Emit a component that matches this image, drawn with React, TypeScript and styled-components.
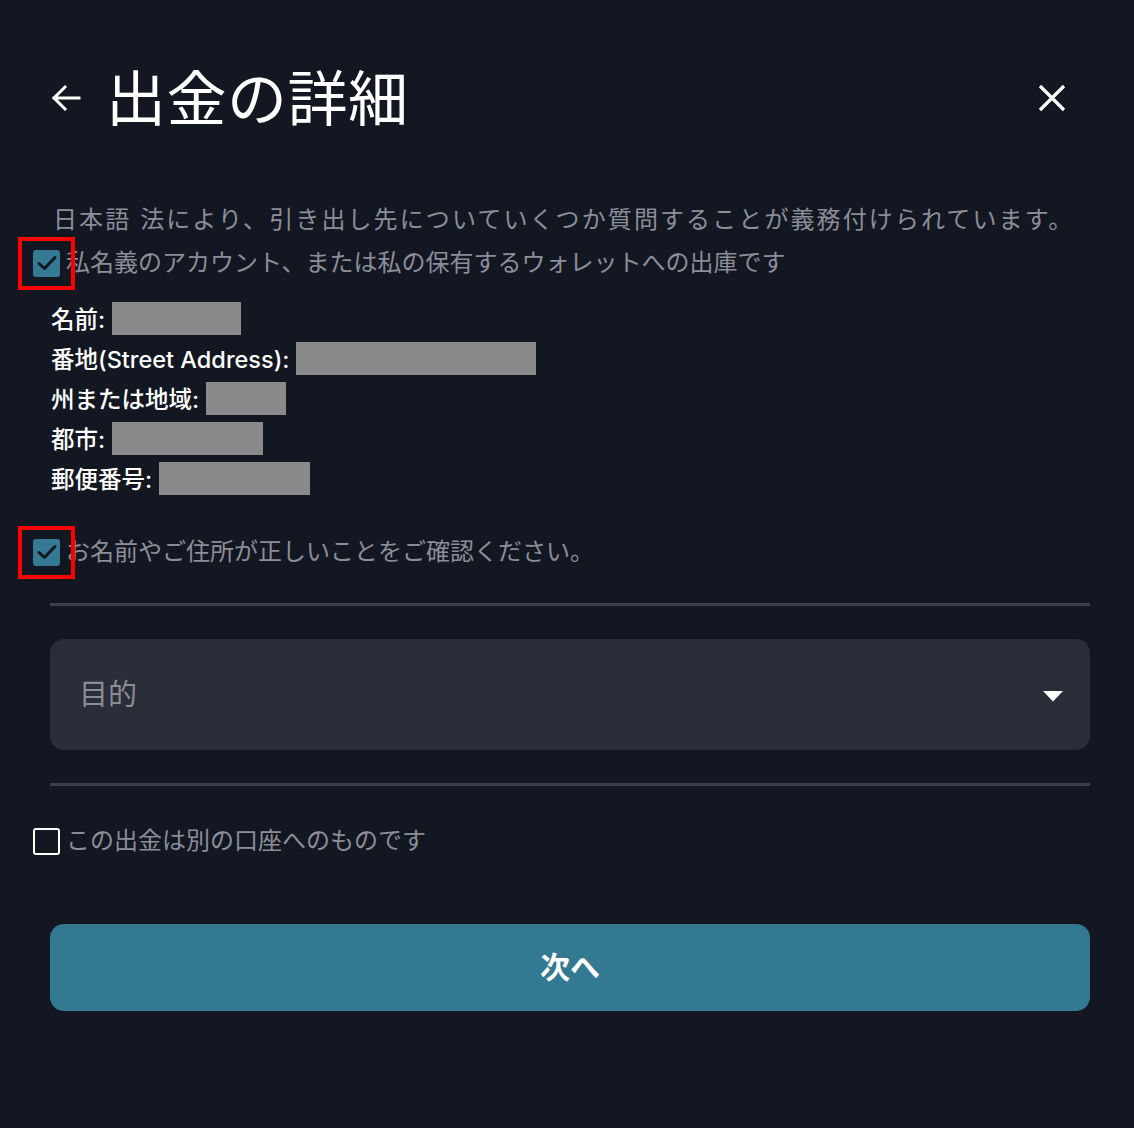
import React from "react";
import styled, { createGlobalStyle } from "styled-components";

const GlobalStyle = createGlobalStyle`
  html, body {
    margin: 0;
    padding: 0;
    background: #131722;
  }
  body {
    font-family: Inter, "Noto Sans CJK JP", "Noto Sans", sans-serif;
    color: #ffffff;
  }
  * { box-sizing: border-box; }
`;

const Page = styled.div`
  width: 1134px;
  min-height: 1128px;
  background: #131722;
  padding: 68px 44px 0 50px;
  display: flex;
  flex-direction: column;
`;

const Header = styled.header`
  display: flex;
  align-items: center;
  height: 60px;
`;

const IconButton = styled.button`
  background: none;
  border: none;
  padding: 0;
  display: flex;
  align-items: center;
  justify-content: center;
  color: #ffffff;
  cursor: pointer;
`;

const Title = styled.h1`
  margin: -6px 0 0 24px;
  font-family: "Noto Sans CJK JP", sans-serif;
  font-weight: 400;
  font-size: 60px;
  line-height: 60px;
  letter-spacing: 0.5px;
  color: #ffffff;
  flex: 1;
`;

const CloseButton = styled(IconButton)`
  margin-right: 24px;
`;

const Info = styled.p`
  margin: 76px 0 0 3px;
  font-family: Inter, "Noto Sans CJK JP", sans-serif;
  font-size: 24px;
  line-height: 32px;
  color: #8b8e99;
  letter-spacing: 2.1px;
  white-space: nowrap;
`;

const CheckRow = styled.label<{ $top: number; $textShift?: number }>`
  display: flex;
  align-items: center;
  height: 32px;
  margin: ${(p) => p.$top}px 0 0 -17px;
  gap: ${(p) => p.$textShift ?? 6}px;
`;

const BoxWrap = styled.span`
  position: relative;
  display: flex;
  flex: none;
`;

const Box = styled.span<{ $checked: boolean }>`
  width: 27px;
  height: 27px;
  border-radius: 3px;
  display: flex;
  align-items: center;
  justify-content: center;
  background: ${(p) => (p.$checked ? "#337a92" : "transparent")};
  border: ${(p) => (p.$checked ? "none" : "2.5px solid #ffffff")};
`;

const Highlight = styled.span`
  position: absolute;
  left: -15px;
  top: -13px;
  width: 57px;
  height: 53px;
  border: 4px solid #ff0000;
  z-index: 2;
  pointer-events: none;
`;

const CheckText = styled.span`
  font-family: Inter, "Noto Sans CJK JP", sans-serif;
  font-size: 24px;
  line-height: 32px;
  color: #8b8e99;
  white-space: nowrap;
`;

const Details = styled.dl`
  margin: 19px 0 0 1px;
  display: flex;
  flex-direction: column;
`;

const DetailRow = styled.div`
  display: flex;
  align-items: center;
  height: 40px;
  gap: 7px;
`;

const DetailLabel = styled.dt`
  font-family: Inter, "Noto Sans CJK JP", sans-serif;
  font-size: 23.5px;
  font-weight: 500;
  color: #ffffff;
  white-space: nowrap;
`;

const Redacted = styled.dd<{ $w: number }>`
  margin: 0;
  width: ${(p) => p.$w}px;
  height: 33px;
  background: #8a8a8a;
`;

const Divider = styled.hr<{ $top: number }>`
  margin: ${(p) => p.$top}px 0 0 0;
  border: none;
  height: 3px;
  background: #3b3e4b;
  width: 100%;
`;

const Select = styled.div`
  margin-top: 33px;
  height: 111px;
  border-radius: 14px;
  background: #2b2d39;
  display: flex;
  align-items: center;
  justify-content: space-between;
  padding: 0 27px 6px 29px;
`;

const Placeholder = styled.span`
  font-family: "Noto Sans CJK JP", sans-serif;
  font-size: 29px;
  color: #8a8c96;
`;

const Caret = styled.svg`
  margin-top: 10px;
`;

const Button = styled.button`
  margin-top: 67px;
  height: 87px;
  width: 100%;
  border: none;
  border-radius: 14px;
  background: #337991;
  color: #ffffff;
  font-family: "Noto Sans CJK JP", sans-serif;
  font-weight: 700;
  font-size: 30px;
  padding: 0 0 6px;
  cursor: pointer;
`;

const Check = () => (
  <svg width="20" height="16" viewBox="0 0 20 16" fill="none">
    <path d="M2 8.5 L7.5 13.5 L18 2.5" stroke="#131722" strokeWidth="3" strokeLinecap="round" strokeLinejoin="round" />
  </svg>
);

const CheckItem: React.FC<{ checked: boolean; highlight?: boolean; top: number; gap?: number; children: React.ReactNode }> = ({
  checked,
  highlight,
  top,
  gap,
  children,
}) => (
  <CheckRow $top={top} $textShift={gap}>
    <BoxWrap>
      <Box $checked={checked}>{checked && <Check />}</Box>
      {highlight && <Highlight />}
    </BoxWrap>
    <CheckText>{children}</CheckText>
  </CheckRow>
);

const details: { label: string; w: number }[] = [
  { label: "名前:", w: 129 },
  { label: "番地(Street Address):", w: 240 },
  { label: "州または地域:", w: 80 },
  { label: "都市:", w: 151 },
  { label: "郵便番号:", w: 151 },
];

export default function App() {
  return (
    <>
      <GlobalStyle />
      <Page>
        <Header>
          <IconButton aria-label="戻る">
            <svg width="32" height="32" viewBox="0 0 32 32" fill="none">
              <path d="M29 16 H4 M15 5 L4 16 L15 27" stroke="#fff" strokeWidth="3" strokeLinecap="square" strokeLinejoin="miter" />
            </svg>
          </IconButton>
          <Title>出金の詳細</Title>
          <CloseButton aria-label="閉じる">
            <svg width="28" height="28" viewBox="0 0 28 28" fill="none">
              <path d="M2 2 L26 26 M26 2 L2 26" stroke="#fff" strokeWidth="3.2" />
            </svg>
          </CloseButton>
        </Header>

        <Info>日本語 法により、引き出し先についていくつか質問することが義務付けられています。</Info>

        <CheckItem checked highlight top={11}>
          私名義のアカウント、または私の保有するウォレットへの出庫です
        </CheckItem>

        <Details>
          {details.map((d) => (
            <DetailRow key={d.label}>
              <DetailLabel>{d.label}</DetailLabel>
              <Redacted $w={d.w} />
            </DetailRow>
          ))}
        </Details>

        <CheckItem checked highlight top={38}>
          お名前やご住所が正しいことをご確認ください。
        </CheckItem>

        <Divider $top={35} />

        <Select>
          <Placeholder>目的</Placeholder>
          <Caret width="20" height="11" viewBox="0 0 20 11">
            <path d="M0 0 H20 L10 10.5 Z" fill="#fff" />
          </Caret>
        </Select>

        <Divider $top={33} />

        <CheckItem checked={false} top={39} gap={6}>
          この出金は別の口座へのものです
        </CheckItem>

        <Button>次へ</Button>
      </Page>
    </>
  );
}
